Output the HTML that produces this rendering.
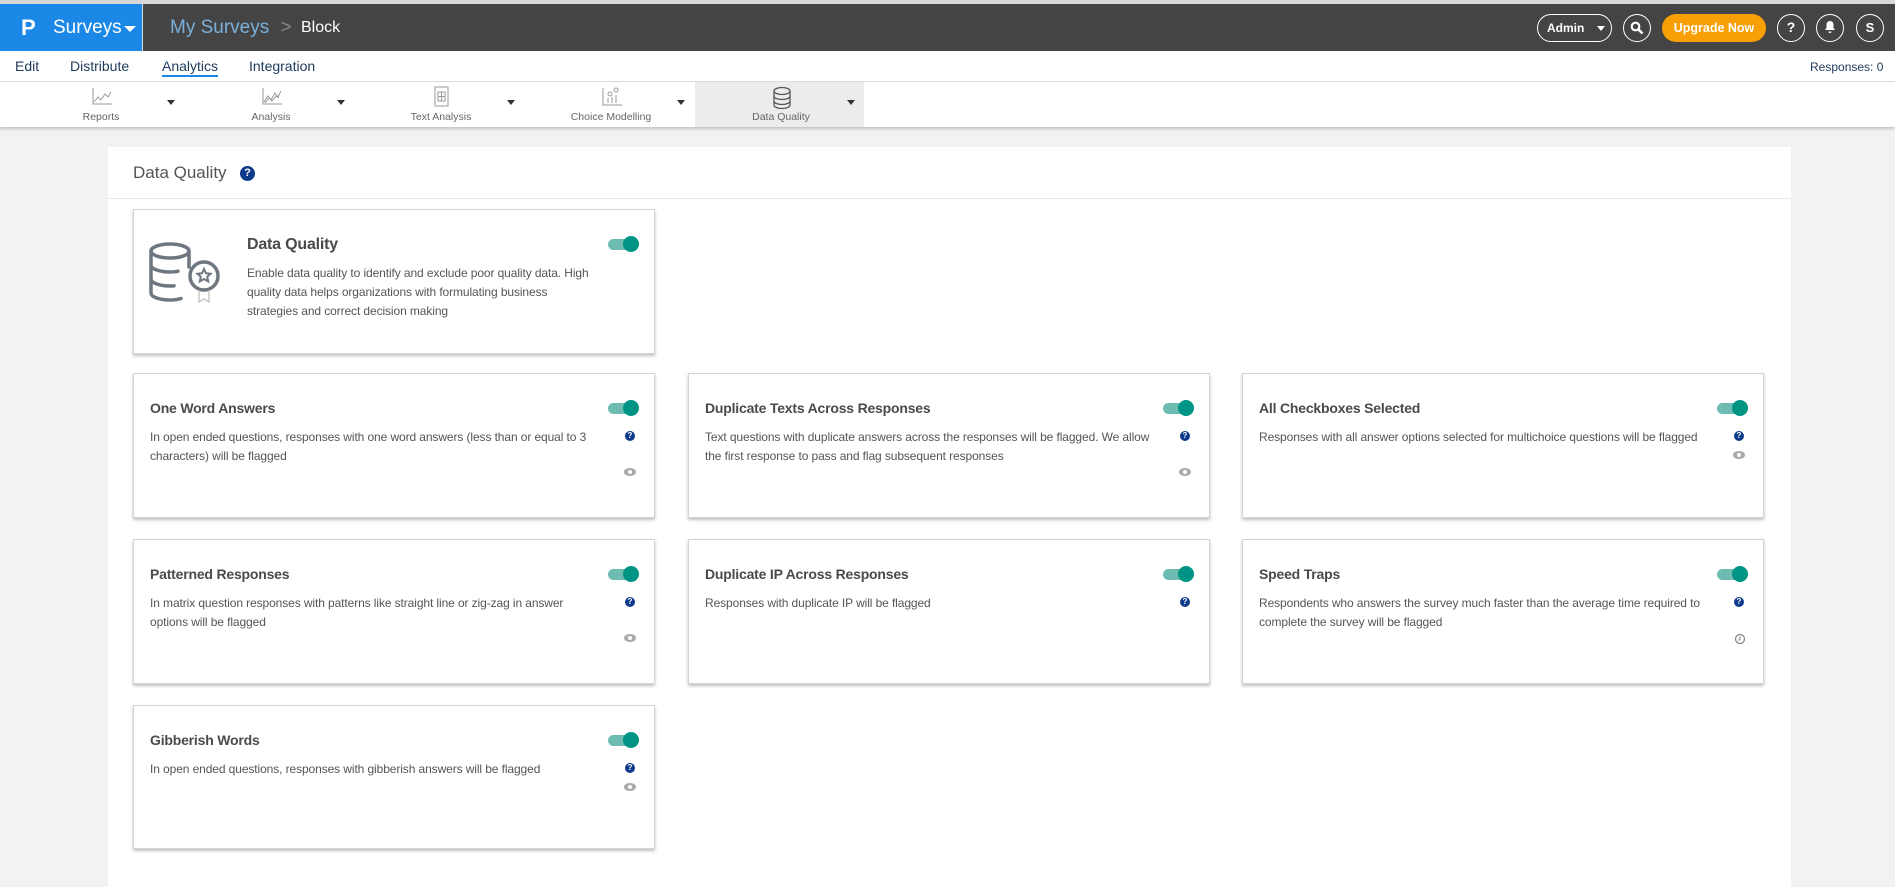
<!DOCTYPE html>
<html><head><meta charset="utf-8"><style>
*{box-sizing:border-box;margin:0;padding:0}
body{width:1895px;height:873px;overflow:hidden;background:#f2f2f2;font-family:"Liberation Sans",sans-serif;position:relative}
.abs{position:absolute}
.top{left:0;top:0;width:1895px;height:4px;background:#d8d8d8}
.hdr{left:0;top:4px;width:1895px;height:47px;background:#444}
.blue{left:0;top:4px;width:143px;height:47px;background:#1b87e6;border-right:1px solid #ddd}
.nav{left:0;top:51px;width:1895px;height:31px;background:#fff;border-bottom:1px solid #ddd}
.nav span{position:absolute;top:7px;font-size:14px;color:#1e3a5c}
.tabs{left:0;top:82px;width:1895px;height:45px;background:#fff;box-shadow:0 2px 3px rgba(0,0,0,.2)}
.tab{position:absolute;top:0;width:170px;height:45px}
.tab .lb{position:absolute;top:29px;left:0;width:172px;text-align:center;font-size:10.5px;color:#666}
.tab .ar{position:absolute;top:18px;left:152px;width:0;height:0;border-left:4px solid transparent;border-right:4px solid transparent;border-top:5px solid #333}
.tab svg{position:absolute;left:76px;top:4px}
.panel{left:108px;top:147px;width:1683px;height:740px;background:#fff}
.card{position:absolute;width:522px;background:#fff;border:1px solid #d4d4d4;box-shadow:0 2px 3px rgba(0,0,0,.25)}
.card h3{position:absolute;left:16px;top:26px;font-size:14px;font-weight:bold;color:#4a4a4a;white-space:nowrap;letter-spacing:-.2px}
.card p{position:absolute;left:16px;top:54px;font-size:12px;line-height:19px;color:#555;white-space:nowrap;letter-spacing:-.1px}
.tg{position:absolute;right:18px;top:29px;width:28px;height:11px;border-radius:6px;background:#6dbbb1}
.tg:after{content:"";position:absolute;right:-3px;top:-3px;width:16px;height:16px;border-radius:50%;background:#009485}
.q{position:absolute;right:19px;top:57px;width:10px;height:10px;border-radius:50%;background:#0d3a8a;color:#fff;font-size:8px;font-weight:bold;text-align:center;line-height:10px}
.eye{position:absolute;right:17px;top:93px}
.circ{position:absolute;top:14px;width:28px;height:28px;border:1.5px solid #fff;border-radius:50%;color:#fff;font-weight:bold;font-size:14px;text-align:center;line-height:25px}
</style></head><body>
<div class="abs top"></div>
<div class="abs hdr"></div>
<div class="abs blue"></div>
<div class="abs" style="left:21px;top:15px;color:#fff;font-size:22px;font-weight:bold">P</div>
<div class="abs" style="left:53px;top:17px;color:#fff;font-size:19px">Surveys</div>
<div class="abs" style="left:124px;top:26px;border-left:6px solid transparent;border-right:6px solid transparent;border-top:6px solid #fff"></div>
<div class="abs" style="left:170px;top:17px;color:#7ab0db;font-size:19px">My Surveys <span style="color:#888;margin-left:6px">&gt;</span></div>
<div class="abs" style="left:301px;top:19px;color:#fff;font-size:16px">Block</div>
<div class="abs" style="left:1537px;top:14px;width:75px;height:28px;border:1.5px solid #fff;border-radius:14px;color:#fff;font-size:12px;font-weight:bold;padding:6px 0 0 9px">Admin</div>
<div class="abs" style="left:1597px;top:26px;border-left:4px solid transparent;border-right:4px solid transparent;border-top:5px solid #fff"></div>
<div class="circ" style="left:1623px"><svg width="14" height="14" viewBox="0 0 14 14" style="margin-top:6px"><circle cx="5.5" cy="5.5" r="3.8" stroke="#fff" stroke-width="2.2" fill="none"/><path d="M8.5 8.5L12.5 12.5" stroke="#fff" stroke-width="2.6"/></svg></div>
<div class="abs" style="left:1662px;top:14px;width:104px;height:28px;border-radius:14px;background:#f79f05;color:#fff;font-size:12.5px;font-weight:bold;text-align:center;line-height:28px">Upgrade Now</div>
<div class="circ" style="left:1777px">?</div>
<div class="circ" style="left:1816px"><svg width="12" height="14" viewBox="0 0 12 14" style="margin-top:5px"><path d="M6 1C3.5 1 2.5 3 2.5 5v3L1 10h10L9.5 8V5C9.5 3 8.5 1 6 1zM4.5 11.5h3a1.5 1.5 0 0 1-3 0z" fill="#fff"/></svg></div>
<div class="circ" style="left:1856px;font-size:13px">S</div>
<div class="abs nav">
<span style="left:15px">Edit</span><span style="left:70px">Distribute</span>
<span style="left:162px;border-bottom:2px solid #1b87e6;padding-bottom:1px">Analytics</span>
<span style="left:249px">Integration</span>
<span style="left:1810px;font-size:12px;top:9px">Responses: 0</span>
</div>
<div class="abs tabs">
<div class="tab" style="left:15px"><svg width="22" height="20"><path d="M2 2V18H21M3 16l4-5 3 3 4-6 3 3 3-5" stroke="#999" fill="none" stroke-width="1"/></svg><div class="lb">Reports</div><div class="ar"></div></div>
<div class="tab" style="left:185px"><svg width="22" height="20"><path d="M2 2V18H21M3 16l4-6 3 4 4-7 3 4 3-6M4 17l4-5 3 3 4-5 3 2" stroke="#999" fill="none" stroke-width="1"/></svg><div class="lb">Analysis</div><div class="ar"></div></div>
<div class="tab" style="left:355px"><svg width="22" height="22"><rect x="4" y="1" width="13" height="19" stroke="#999" fill="none"/><rect x="7" y="6" width="7" height="9" stroke="#999" fill="none"/><path d="M10.5 6v9M7 10.5h7" stroke="#999"/></svg><div class="lb">Text Analysis</div><div class="ar"></div></div>
<div class="tab" style="left:525px"><svg width="22" height="22"><path d="M2 2V19H21M7 17v-5M11 17v-6M15 17v-8" stroke="#999" fill="none"/><circle cx="9" cy="8" r="2" stroke="#999" fill="none"/><circle cx="15" cy="4" r="2" stroke="#999" fill="none"/></svg><div class="lb">Choice Modelling</div><div class="ar"></div></div>
<div class="tab" style="left:695px;width:169px;background:#ececec"><svg width="22" height="24"><ellipse cx="11" cy="5" rx="8" ry="3.5" stroke="#555" fill="none" stroke-width="1.3"/><path d="M3 5v14c0 2 3.5 3.5 8 3.5s8-1.5 8-3.5V5M3 10c0 2 3.5 3.5 8 3.5s8-1.5 8-3.5M3 15c0 2 3.5 3.5 8 3.5s8-1.5 8-3.5" stroke="#555" fill="none" stroke-width="1.3"/></svg><div class="lb">Data Quality</div><div class="ar"></div></div>
</div>
<div class="abs panel">
<div class="abs" style="left:25px;top:16px;font-size:17px;color:#555">Data Quality</div>
<div class="abs" style="left:132px;top:19px;width:15px;height:15px;border-radius:50%;background:#0d3a8a;color:#fff;font-size:11px;font-weight:bold;text-align:center;line-height:15px">?</div>
<div class="abs" style="left:0;top:51px;width:1683px;height:1px;background:#e8e8e8"></div>
</div>
<div class="card" style="left:133px;top:209px;height:145px">
<svg class="abs" style="left:14px;top:32px" width="76" height="62" viewBox="0 0 76 62"><g stroke="#6e7780" stroke-width="3.5" fill="none" stroke-linecap="round"><ellipse cx="22" cy="9" rx="19" ry="7"/><path d="M3 9v42c0 4 9 7 19 7 4 0 8-.5 11-1.5M3 23c0 4 9 7 19 7 3 0 6-.3 8-.8M3 37c0 4 9 7 19 7 2 0 3 0 4-.2M41 9v16"/><circle cx="56" cy="34" r="14"/></g><path d="M56 27l2 4.3 4.6.5-3.4 3 1 4.6-4.2-2.4-4.2 2.4 1-4.6-3.4-3 4.6-.5z" stroke="#6e7780" stroke-width="2" fill="none"/><path d="M51 48v12l5-3 5 3V48" stroke="#bbb" stroke-width="1.2" fill="none"/></svg>
<h3 style="left:113px;top:26px;font-size:16px">Data Quality</h3>
<p style="left:113px;top:54px">Enable data quality to identify and exclude poor quality data. High<br>quality data helps organizations with formulating business<br>strategies and correct decision making</p>
<div class="tg"></div>
</div>
<div class="card" style="left:133px;top:373px;height:145px"><h3>One Word Answers</h3><p>In open ended questions, responses with one word answers (less than or equal to 3<br>characters) will be flagged</p><div class="tg"></div><div class="q">?</div><svg class="eye" width="14" height="10"><ellipse cx="7" cy="5" rx="6" ry="4" fill="#aaa"/><circle cx="7" cy="5" r="2" fill="#fff"/></svg></div>
<div class="card" style="left:688px;top:373px;height:145px"><h3>Duplicate Texts Across Responses</h3><p>Text questions with duplicate answers across the responses will be flagged. We allow<br>the first response to pass and flag subsequent responses</p><div class="tg"></div><div class="q">?</div><svg class="eye" width="14" height="10"><ellipse cx="7" cy="5" rx="6" ry="4" fill="#aaa"/><circle cx="7" cy="5" r="2" fill="#fff"/></svg></div>
<div class="card" style="left:1242px;top:373px;height:145px"><h3>All Checkboxes Selected</h3><p>Responses with all answer options selected for multichoice questions will be flagged</p><div class="tg"></div><div class="q">?</div><svg class="eye" style="top:76px" width="14" height="10"><ellipse cx="7" cy="5" rx="6" ry="4" fill="#aaa"/><circle cx="7" cy="5" r="2" fill="#fff"/></svg></div>
<div class="card" style="left:133px;top:539px;height:145px"><h3>Patterned Responses</h3><p>In matrix question responses with patterns like straight line or zig-zag in answer<br>options will be flagged</p><div class="tg"></div><div class="q">?</div><svg class="eye" width="14" height="10"><ellipse cx="7" cy="5" rx="6" ry="4" fill="#aaa"/><circle cx="7" cy="5" r="2" fill="#fff"/></svg></div>
<div class="card" style="left:688px;top:539px;height:145px"><h3>Duplicate IP Across Responses</h3><p>Responses with duplicate IP will be flagged</p><div class="tg"></div><div class="q">?</div></div>
<div class="card" style="left:1242px;top:539px;height:145px"><h3>Speed Traps</h3><p>Respondents who answers the survey much faster than the average time required to<br>complete the survey will be flagged</p><div class="tg"></div><div class="q">?</div><svg class="eye" width="12" height="12"><circle cx="6" cy="6" r="4.5" stroke="#888" stroke-width="1.3" fill="none"/><path d="M6 3.5V6L4.5 7.5" stroke="#888" stroke-width="1.2" fill="none"/></svg></div>
<div class="card" style="left:133px;top:705px;height:144px"><h3>Gibberish Words</h3><p>In open ended questions, responses with gibberish answers will be flagged</p><div class="tg"></div><div class="q">?</div><svg class="eye" style="top:76px" width="14" height="10"><ellipse cx="7" cy="5" rx="6" ry="4" fill="#aaa"/><circle cx="7" cy="5" r="2" fill="#fff"/></svg></div>
</body></html>
